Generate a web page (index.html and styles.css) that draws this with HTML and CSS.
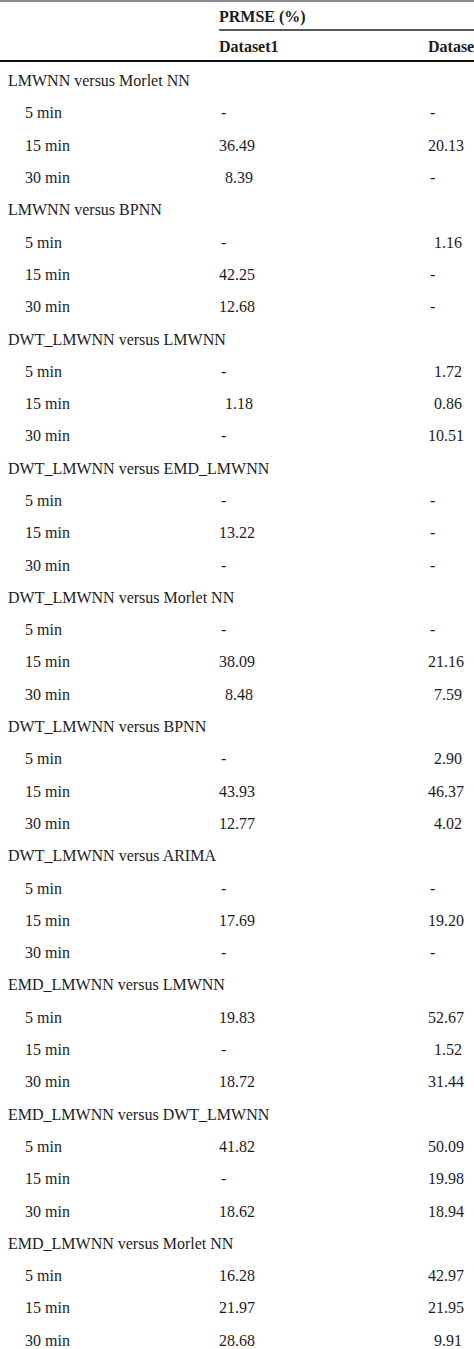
FILE: index.html
```html
<!DOCTYPE html>
<html>
<head>
<meta charset="utf-8">
<link rel="stylesheet" href="styles.css">
</head>
<body>
<div class="table">
  <div class="head1">
    <div></div>
    <div class="span">PRMSE (%)</div>
  </div>
  <div class="head2">
    <div></div>
    <div>Dataset1</div>
    <div>Dataset2</div>
  </div>
  <div class="body" id="body"></div>
</div>
<script src="app.js"></script>
</body>
</html>
```
FILE: styles.css
```css
html, body {
  margin: 0;
  padding: 0;
  overflow: hidden;
  background: #fff;
}
body {
  font-family: "Liberation Serif", "Times New Roman", serif;
  font-size: 16px;
  color: #1c1c1c;
}
.table {
  width: 640px;
  border-top: 2px solid #8a8a8a;
}
.head1, .head2, .row {
  display: grid;
  grid-template-columns: 219px 209px 1fr;
  align-items: center;
}
.head1 {
  height: 27px;
  font-weight: bold;
}
.head1 .span {
  grid-column: 2 / 4;
  height: 27px;
  line-height: 30px;
}
.head2 {
  height: 31px;
  font-weight: bold;
  border-bottom: 2px solid #111;
  position: relative;
}
.head2::before {
  content: "";
  position: absolute;
  left: 219px;
  right: 0;
  top: 0;
  border-top: 2px solid #5a5a5a;
}
.head2 div {
  line-height: 36px;
}
.body {
  padding-top: 3px;
}
.row {
  height: 32.3px;
}
.row .label {
  padding-left: 8px;
  white-space: nowrap;
}
.row .title {
  grid-column: 1 / 4;
}
.row.sub .label {
  padding-left: 25px;
}
.num {
  display: inline-block;
  width: 34px;
  text-align: right;
}
.dash {
  display: inline-block;
  width: 34px;
  padding-left: 2px;
  text-align: left;
}
```
FILE: app.js
```js
const data = [
  ["LMWNN versus Morlet NN", [["-", "-"], ["36.49", "20.13"], ["8.39", "-"]]],
  ["LMWNN versus BPNN", [["-", "1.16"], ["42.25", "-"], ["12.68", "-"]]],
  ["DWT_LMWNN versus LMWNN", [["-", "1.72"], ["1.18", "0.86"], ["-", "10.51"]]],
  ["DWT_LMWNN versus EMD_LMWNN", [["-", "-"], ["13.22", "-"], ["-", "-"]]],
  ["DWT_LMWNN versus Morlet NN", [["-", "-"], ["38.09", "21.16"], ["8.48", "7.59"]]],
  ["DWT_LMWNN versus BPNN", [["-", "2.90"], ["43.93", "46.37"], ["12.77", "4.02"]]],
  ["DWT_LMWNN versus ARIMA", [["-", "-"], ["17.69", "19.20"], ["-", "-"]]],
  ["EMD_LMWNN versus LMWNN", [["19.83", "52.67"], ["-", "1.52"], ["18.72", "31.44"]]],
  ["EMD_LMWNN versus DWT_LMWNN", [["41.82", "50.09"], ["-", "19.98"], ["18.62", "18.94"]]],
  ["EMD_LMWNN versus Morlet NN", [["16.28", "42.97"], ["21.97", "21.95"], ["28.68", "9.91"]]]
];
const mins = ["5 min", "15 min", "30 min"];
const body = document.getElementById("body");
function cell(v) {
  const d = document.createElement("div");
  const s = document.createElement("span");
  s.className = v === "-" ? "dash" : "num";
  s.textContent = v;
  d.appendChild(s);
  return d;
}
data.forEach(([title, rows]) => {
  const r = document.createElement("div");
  r.className = "row";
  const l = document.createElement("div");
  l.className = "label title";
  l.textContent = title;
  r.appendChild(l);
  body.appendChild(r);
  rows.forEach((vals, i) => {
    const rr = document.createElement("div");
    rr.className = "row sub";
    const ll = document.createElement("div");
    ll.className = "label";
    ll.textContent = mins[i];
    rr.appendChild(ll);
    rr.appendChild(cell(vals[0]));
    rr.appendChild(cell(vals[1]));
    body.appendChild(rr);
  });
});
```
